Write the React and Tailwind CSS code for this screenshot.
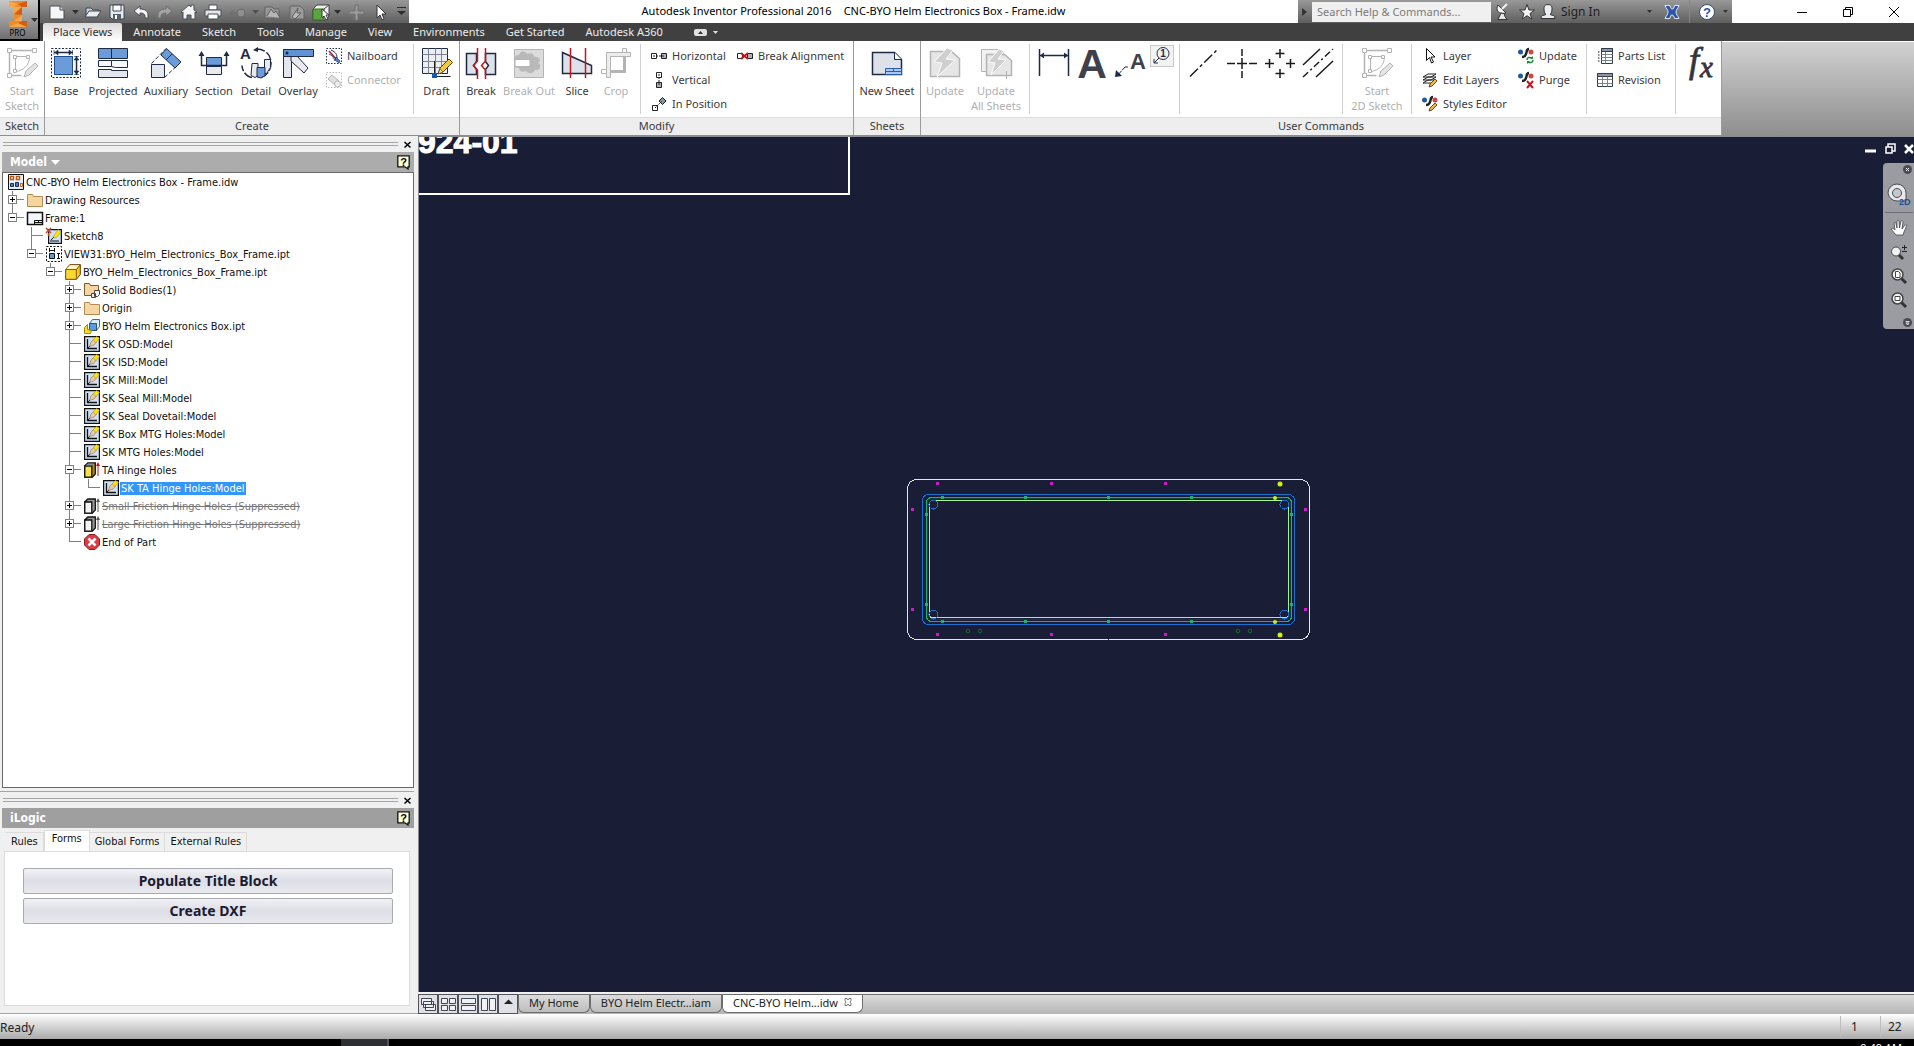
import { useState } from 'react';

const NAVY = '#1f2a44';
const GREY = '#b4b4b4';

/* ---------- helpers ---------- */

function Svg({ w = 16, h, children, className = '' }) {
    return (
        <svg width={w} height={h || w} viewBox={`0 0 ${w} ${h || w}`} fill="none" className={`shrink-0 overflow-visible ${className}`} aria-hidden="true">
            {children}
        </svg>
    );
}

function Caret({ className = 'text-[#2e2e2e]' }) {
    return (
        <Svg w={7} h={4} className={className}>
            <path d="M0 0h7L3.500 4z" fill="currentColor" />
        </Svg>
    );
}

/* ---------- quick access icons ---------- */

const qat = {
    new: (
        <Svg w={20}>
            <path d="M3 4h10l4 4v9H3z" fill="#f4f6f8" stroke="#4a4d52" />
            <path d="M13 4v4h4" fill="#cfd4da" stroke="#4a4d52" />
        </Svg>
    ),
    open: (
        <Svg w={20}>
            <path d="M3 15V6h5l2 2h6v2" fill="#c9d0d8" stroke="#3f4650" />
            <path d="M2 15l4-6h12l-4 6z" fill="#e9edf1" stroke="#3f4650" />
        </Svg>
    ),
    save: (
        <Svg w={20}>
            <path d="M3 3h14v14H5l-2-2z" fill="#e6e9ee" stroke="#3c4454" />
            <path d="M6 3h8v6H6z" fill="#fff" stroke="#3c4454" />
            <path d="M6 12h8v5H6z" fill="#56606f" />
            <path d="M8 13h2v4H8z" fill="#fff" />
        </Svg>
    ),
    undo: (
        <Svg w={20}>
            <path d="M3 9l6-5v3c5 0 8 2 8 6v3h-3v-2c0-2-2-3-5-3v3z" fill="#f2f4f6" stroke="#4a4d52" />
        </Svg>
    ),
    redo: (
        <Svg w={20}>
            <path d="M17 9l-6-5v3c-5 0-8 2-8 6v3h3v-2c0-2 2-3 5-3v3z" fill="#a3a3a3" stroke="#6e6e6e" />
        </Svg>
    ),
    home: (
        <Svg w={20}>
            <path d="M2 10l8-7 2 2V3h3v5l3 2-1 1-1-1v7h-4v-4H8v4H4v-7l-1 1z" fill="#f2f4f6" stroke="#4a4d52" />
        </Svg>
    ),
    print: (
        <Svg w={20}>
            <path d="M6 3h8v5H6z" fill="#fff" stroke="#4a4d52" />
            <path d="M2 8h16v6H2z" fill="#e4e7ea" stroke="#4a4d52" />
            <path d="M5 12h10v5H5z" fill="#fff" stroke="#4a4d52" />
        </Svg>
    ),
    back: (
        <Svg w={20}>
            <path d="M2 11l4-3v2h4v2H6v2z" fill="#6f6f6f" />
            <circle cx="14" cy="11" r="4" fill="#8f8f8f" stroke="#6a6a6a" />
        </Svg>
    ),
    image: (
        <Svg w={20}>
            <path d="M2 5h7l2 2h5v9H2z" fill="#999" stroke="#636363" />
            <path d="M4 14l4-7 3 4 2-2 4 7" fill="#b5b5b5" stroke="#5e5e5e" />
        </Svg>
    ),
    sheet: (
        <Svg w={20}>
            <path d="M3 4h10l4 4v9H3z" fill="#9a9a9a" stroke="#636363" />
            <path d="M5 15l6-9-1 5h4l-6 6z" fill="#bbb" stroke="#5e5e5e" />
        </Svg>
    ),
    cube: (
        <Svg w={20}>
            <path d="M2 7l4-4h12v11l-4 4H2z" fill="#eef1ee" stroke="#444" />
            <path d="M2 7h11v11H2z" fill="#58a63c" stroke="#3c6b2c" />
            <path d="M13 7l5-4" stroke="#444" />
            <path d="M11 7v9l2-2 2 4 2-1-2-4h3z" fill="#fff" stroke="#333" />
        </Svg>
    ),
    plus: (
        <Svg w={20}>
            <path d="M8 3h3v6h6v3h-6v6H8v-6H2V9h6z" fill="#9b9b9b" stroke="#717171" />
        </Svg>
    ),
    cursor: (
        <Svg w={20}>
            <path d="M6 3v13l3-3 2 5 2-1-2-5h4z" fill="#fff" stroke="#333" />
        </Svg>
    ),
};

/* ---------- ribbon icons, 32px ---------- */

function StartSketchIcon() {
    return (
        <Svg w={32}>
            <g stroke={GREY}>
                <path d="M3.500 3.500h26M3.500 3.500v25h12" strokeWidth="1.500" />
                <path d="M9.500 9.500h14c0 8-5 14-14 15z" />
                <path d="M1.500 1.500h4v4h-4zM26.500 1.500h4v4h-4zM1.500 26.500h4v4h-4zM7.500 8.500h3v3h-3zM20.500 8.500h3v3h-3zM7.500 22.500h3v3h-3z" fill="#fff" />
                <path d="M18 30l2-6 9-8 3 3-9 9z" fill="#e4e4e4" />
            </g>
        </Svg>
    );
}

function BaseIcon() {
    return (
        <Svg w={32}>
            <rect x="1.500" y="1.500" width="29" height="29" stroke={NAVY} strokeDasharray="2 1.500" />
            <rect x="4.500" y="9.500" width="18" height="18" fill="#6b9bd8" stroke="#1d4d8f" />
            <path d="M4 5.500h19M26.500 9v19" stroke={NAVY} strokeWidth="1.500" />
            <path d="M4 3v5M22.500 3v5M24 9.500h5M24 27.500h5M5 5.500l3-2.500v5zM22 5.500L19 3v5zM26.500 10L24 13h5zM26.500 27L24 24h5z" fill={NAVY} stroke={NAVY} strokeWidth=".6" />
        </Svg>
    );
}

function ProjectedIcon() {
    return (
        <Svg w={32}>
            <path d="M1.500 1.500h29v10h-29z" fill="#6b9bd8" stroke={NAVY} />
            <path d="M14.500 1.500v10" stroke={NAVY} />
            <path d="M1.500 13.500h13v6h-13zM14.500 13.500h16v7h-12l-4-1" fill="#f6f7f9" stroke={NAVY} />
            <path d="M1.500 22.500h13v1h16v7h-29z" fill="#e3e6ec" stroke={NAVY} />
        </Svg>
    );
}

function AuxiliaryIcon() {
    return (
        <Svg w={32}>
            <path d="M1.500 16.500L16 1.500M14.500 30.500L31 15" stroke={NAVY} strokeDasharray="4 2" />
            <path d="M11 8l5.500-6.500L31 15l-6 6z" fill="#6b9bd8" stroke={NAVY} />
            <path d="M22 7l-6 6" stroke={NAVY} />
            <path d="M1.500 17.500h13v13h-13z" fill="#e3e6ec" stroke={NAVY} />
        </Svg>
    );
}

function SectionIcon() {
    return (
        <Svg w={32}>
            <path d="M8.500 10.500h15v9h-15z" fill="#6b9bd8" stroke={NAVY} />
            <path d="M8.500 19.500h15v8h-15z" fill="#e8eaee" stroke={NAVY} />
            <path d="M3.500 8v10.500h25V8" stroke={NAVY} strokeWidth="1.500" />
            <path d="M.5 9l3-5 3 5zM25.500 9l3-5 3 5z" fill={NAVY} />
        </Svg>
    );
}

function DetailIcon() {
    return (
        <Svg w={32}>
            <path d="M12 30.500c-6-1-10-7-10-12M16 2c10 0 15 6 15 14s-5 14-12 15" stroke={NAVY} strokeWidth="1.500" strokeDasharray="9 2" />
            <path d="M12 16.500h6v12l-3 2-4-2zM24.500 12.500h6v8l-4 6h-2z" fill="#e8eaee" stroke={NAVY} />
            <path d="M17 20.500h8v8l-4 2.500-4-1z" fill="#6b9bd8" stroke={NAVY} />
            <path d="M13 3l5-3v5z" fill={NAVY} />
            <text x="0" y="12" fontSize="15" fontWeight="bold" fontFamily="Liberation Sans, sans-serif" fill={NAVY}>A</text>
        </Svg>
    );
}

function OverlayIcon() {
    return (
        <Svg w={32}>
            <path d="M1.500 2.500h8v28h-8z" fill="#e3e6ec" stroke={NAVY} />
            <path d="M9 9l5-1 12 13-4 5L9 14z" fill="#e8eaee" stroke={NAVY} />
            <path d="M1.500 2.500h30v7h-30z" fill="#5f93d6" stroke={NAVY} />
            <circle cx="5" cy="6" r="1.500" fill={NAVY} />
        </Svg>
    );
}

function DraftIcon() {
    return (
        <Svg w={32}>
            <path d="M1.500 1.500h25v25h-25z" fill="#eceef2" stroke={NAVY} />
            <path d="M7.500 1.500v25M14.500 1.500v25M20.500 1.500v25M1.500 7.500h25M1.500 14.500h25M1.500 20.500h25" stroke="#7c8393" />
            <path d="M13.500 14v15M13.500 29.500h16" stroke="#1a1a1a" />
            <path d="M11 26h5v5h-5z" fill="#1559b5" />
            <path d="M17 27l2-6 9-9 3.500 3.500-9 9z" fill="#f6c832" stroke="#51401a" />
            <path d="M17 27l2-5 3 3z" fill="#f1dfb8" stroke="#51401a" strokeWidth=".6" />
        </Svg>
    );
}

function BreakIcon() {
    return (
        <Svg w={32}>
            <path d="M1.500 6.500h10v8l-3 4 3 4v5h-10zM20.500 6.500h10v21h-10v-5l3-4-3-4z" fill="#dde2ea" stroke={NAVY} strokeWidth="1.500" />
            <path d="M12.500 1v13l-4 4.500 4 4.500v9M20.500 1v13l-4 4.500 4 4.500v9" stroke="#c4161c" strokeWidth="1.500" />
        </Svg>
    );
}

function BreakOutIcon() {
    return (
        <Svg w={32}>
            <path d="M1.500 2.500h29v28h-29z" fill="#dcdcdc" stroke={GREY} />
            <path d="M2 10c2-3 4-1 5-4 3-3 6-1 7 1 4-2 7 0 7 3 5-1 8 4 4 6 4 2 2 8-3 7-2 5-8 3-9 1-4 2-7 0-7-3-2 0-4 0-4-2z" fill="#b9b9b9" />
            <path d="M2 12.500h15v7H2z" fill="#fff" stroke={GREY} />
        </Svg>
    );
}

function SliceIcon() {
    return (
        <Svg w={32}>
            <path d="M1.500 5.500v21h29v-8z" fill="#dde2ea" stroke={NAVY} strokeWidth="1.500" />
            <path d="M9.500 1v30M24.500 1v30" stroke="#c4161c" strokeWidth="1.500" />
        </Svg>
    );
}

function CropIcon() {
    return (
        <Svg w={32}>
            <path d="M6.500 30.500v-25h24v4h-20v21z" fill="#ececec" stroke={GREY} />
            <path d="M10.500 24.500h14v-15" stroke={GREY} strokeWidth="3" />
            <path d="M22.500 1.500h4v4h-4zM1.500 22.500h5v4h-5z" fill="#fff" stroke={GREY} />
        </Svg>
    );
}

function NewSheetIcon() {
    return (
        <Svg w={32}>
            <path d="M1.500 5.500h22l7 7v15h-29z" fill="#dde2ea" stroke={NAVY} strokeWidth="1.500" />
            <path d="M23.500 5.500v7h7" fill="#fff" stroke={NAVY} />
            <path d="M14.500 21.500h16v6h-16z" fill="#a9c8f2" stroke="#2c5da3" />
            <path d="M14.500 24.500h16M22.500 21.500v3" stroke="#2c5da3" />
        </Svg>
    );
}

function UpdateIcon() {
    return (
        <Svg w={32}>
            <path d="M1.500 4.500h21l8 7v18h-29z" fill="#e6e6e6" stroke={GREY} strokeWidth="1.500" />
            <path d="M18 1L5 15l8 1-5 14 18-17-9-1 7-9z" fill="#cfcfcf" stroke="#fff" />
        </Svg>
    );
}

function UpdateAllIcon() {
    return (
        <Svg w={32}>
            <path d="M1.500 2.500h18l5 5v17h-23z" fill="#f2f2f2" stroke={GREY} />
            <path d="M6.500 7.500h18l7 6v15h-25z" fill="#e6e6e6" stroke={GREY} strokeWidth="1.500" />
            <path d="M19 2L8 15l7 1-4 12 15-15-8-1 6-8z" fill="#cfcfcf" stroke="#fff" />
            <path d="M26.500 24v8M22 28.500h9" stroke={GREY} />
        </Svg>
    );
}

function DimensionIcon() {
    return (
        <Svg w={32}>
            <path d="M1.500 2v27M30.500 2v27M2 8.500h28" stroke={NAVY} strokeWidth="1.500" />
            <path d="M2 8.500l4-3v6zM30 8.500l-4-3v6z" fill={NAVY} />
        </Svg>
    );
}

function TextIcon() {
    return (
        <Svg w={32}>
            <text x="16" y="31" fontSize="41" fontWeight="bold" textAnchor="middle" fontFamily="Liberation Sans, sans-serif" fill="#3f404c">A</text>
        </Svg>
    );
}

function LeaderIcon() {
    return (
        <Svg w={32}>
            <path d="M3 29l8-9h4" stroke={NAVY} strokeDasharray="7 1" />
            <path d="M1 30l1-7 6 6z" fill={NAVY} />
            <text x="24" y="22" fontSize="22" fontWeight="bold" textAnchor="middle" fontFamily="Liberation Sans, sans-serif" fill="#3f404c">A</text>
        </Svg>
    );
}

function BalloonIcon() {
    return (
        <Svg w={20}>
            <circle cx="11" cy="7.500" r="6" stroke={NAVY} />
            <path d="M7 12l-5 5M2 13v4h4" stroke={NAVY} />
            <text x="11" y="11" fontSize="10" fontWeight="bold" textAnchor="middle" fontFamily="Liberation Sans, sans-serif" fill={NAVY}>1</text>
        </Svg>
    );
}

function CenterlineIcon() {
    return (
        <Svg w={32}>
            <path d="M2 29.500L30 2" stroke="#1a1a1a" strokeWidth="1.500" strokeDasharray="11 3 3 3" />
        </Svg>
    );
}

function CenterMarkIcon() {
    return (
        <Svg w={32}>
            <path d="M16 2v7M16 11v11M16 24v7M1 16.500h8M11 16.500h10M23 16.500h8" stroke="#1a1a1a" strokeWidth="1.500" />
        </Svg>
    );
}

function CenterPatternIcon() {
    return (
        <Svg w={32}>
            <path d="M16 2v9M11.500 6.500h9M16 22v9M11.500 26.500h9M5.500 12v9M1 16.500h9M26.500 12v9M22 16.500h9" stroke="#1a1a1a" strokeWidth="1.500" />
        </Svg>
    );
}

function BisectorIcon() {
    return (
        <Svg w={32}>
            <path d="M1 18L18 2M14 30l17-16" stroke="#1a1a1a" strokeWidth="1.500" />
            <path d="M1 30L31 2" stroke="#1a1a1a" strokeWidth="1.500" strokeDasharray="7 3 2 3" />
        </Svg>
    );
}

/* ---------- ribbon icons, 16px ---------- */

function Pencil({ x = 0, y = 0 }) {
    return <path transform={`translate(${x} ${y})`} d="M0 8l1-3 5-5 2 2-5 5z" fill="#f3b63a" stroke="#5b3b12" strokeWidth=".9" />;
}

function NailboardIcon() {
    return (
        <Svg>
            <rect x=".5" y=".5" width="15" height="15" stroke={NAVY} strokeDasharray="1.500 1.500" />
            <path d="M3 3l8 9" stroke="#c4161c" strokeWidth="1.500" />
            <path d="M5 2c5 2 6 5 6 8" stroke={NAVY} />
            <path d="M3 6c3 1 5 4 6 7" stroke="#2c5da3" />
            <path d="M10 9l4 4-1 2-4-3z" fill="#4e86d0" stroke={NAVY} strokeWidth=".7" />
        </Svg>
    );
}

function ConnectorIcon() {
    return (
        <Svg>
            <rect x=".5" y=".5" width="15" height="15" stroke="#bdbdbd" strokeDasharray="1.500 1.500" />
            <path d="M2 7l4-4 7 6-4 4z" fill="#e1e1e1" stroke={GREY} />
            <circle cx="11.500" cy="12" r="3" fill="#eee" stroke={GREY} />
        </Svg>
    );
}

function HorizontalIcon() {
    return (
        <Svg>
            <path d="M.5 5.500h5v5h-5z" fill="#fff" stroke="#222" />
            <path d="M10.500 5.500h5v5h-5z" fill="#aab2c0" stroke="#222" />
            <path d="M2 8h12" stroke="#222" strokeDasharray="2 1" />
        </Svg>
    );
}

function VerticalIcon() {
    return (
        <Svg>
            <path d="M5.500.5h5v5h-5z" fill="#fff" stroke="#222" />
            <path d="M5.500 10.500h5v5h-5z" fill="#aab2c0" stroke="#222" />
            <path d="M8 2v12" stroke="#222" strokeDasharray="2 1" />
        </Svg>
    );
}

function InPositionIcon() {
    return (
        <Svg>
            <path d="M1.500 9.500h5v5h-5z" fill="#fff" stroke="#222" />
            <path d="M8 5l3.500-3.500L15 5l-3.500 3.500z" fill="#8b93a1" stroke="#222" />
            <path d="M4 12l7-7" stroke="#222" strokeDasharray="2 1" />
        </Svg>
    );
}

function BreakAlignIcon() {
    return (
        <Svg>
            <path d="M.5 5.500h5v5h-5z" fill="#fff" stroke="#222" />
            <path d="M10.500 5.500h5v5h-5z" fill="#aab2c0" stroke="#222" />
            <path d="M4 5l7 6M11 5l-7 6" stroke="#c4161c" strokeWidth="2" />
        </Svg>
    );
}

function LayerIcon() {
    return (
        <Svg>
            <path d="M4.500.5v12l3-3 2 5.500 2-1-2.500-5h4z" fill="#fff" stroke="#111" />
        </Svg>
    );
}

function EditLayersIcon() {
    return (
        <Svg>
            <path d="M1 11l5-3h8l-5 3zM1 8l5-3h8l-5 3zM1 5l5-3h8l-5 3z" fill="#fff" stroke="#222" />
            <Pencil x={7} y={7} />
        </Svg>
    );
}

function StyleMarks() {
    return (
        <>
            <circle cx="2.500" cy="4" r="2.500" fill="#1e5aa0" />
            <circle cx="13" cy="4" r="2.500" fill="#c94a45" />
            <path d="M11 1C8 1 9 4 8 6s-1 3-4 3" stroke="#222" strokeWidth="2.500" />
        </>
    );
}

function StylesEditorIcon() {
    return (
        <Svg>
            <StyleMarks />
            <Pencil x={7} y={7} />
        </Svg>
    );
}

function StylesUpdateIcon() {
    return (
        <Svg>
            <StyleMarks />
            <path d="M9 12c0-3 3-3 5-2M15 12c0 3-3 3-5 2" stroke="#1e8a35" strokeWidth="1.500" />
            <path d="M15 8v3h-3zM9 16v-3h3z" fill="#1e8a35" />
        </Svg>
    );
}

function PurgeIcon() {
    return (
        <Svg>
            <StyleMarks />
            <path d="M9 9l6 7M15 9l-6 7" stroke="#c4161c" strokeWidth="2" />
        </Svg>
    );
}

function PartsListIcon() {
    return (
        <Svg>
            <path d="M4.500.5h11v15h-11z" fill="#fff" stroke="#333b4b" />
            <path d="M4.500.5h11v3h-11z" fill="#8d97a8" stroke="#333b4b" />
            <path d="M4.500 6.500h11M4.500 9.500h11M4.500 12.500h11M8.500 3.500v12" stroke="#7a8190" />
            <path d="M1 4h1.500M1 7h1.500M1 10h1.500M1 13h1.500" stroke="#222" />
        </Svg>
    );
}

function RevisionIcon() {
    return (
        <Svg>
            <path d="M.5 1.500h15v13H.5z" fill="#fff" stroke="#333b4b" />
            <path d="M.5 1.500h15v3H.5z" fill="#8d97a8" stroke="#333b4b" />
            <path d="M.5 7.500h15M.5 11.500h15M5.500 4.500v10M10.500 4.500v10" stroke="#7a8190" />
        </Svg>
    );
}

/* ---------- ribbon pieces ---------- */

function BigButton({ icon, label, width, disabled }) {
    return (
        <button
            type="button"
            disabled={disabled}
            className={`flex flex-col items-center gap-1 pt-1.5 text-[#3a3a40] disabled:text-[#b0b0b0] leading-[15px] whitespace-pre text-center ${width}`}
        >
            {icon}
            <span>{label}</span>
        </button>
    );
}

function SmallButton({ icon, label, disabled }) {
    return (
        <button type="button" disabled={disabled} className="flex h-6 items-center gap-[5px] whitespace-nowrap text-[#3a3a40] disabled:text-[#b0b0b0]">
            {icon}
            <span>{label}</span>
        </button>
    );
}

function IconButton({ icon, label, width }) {
    return (
        <button type="button" aria-label={label} className={`flex items-start justify-center pt-1.5 ${width}`}>
            {icon}
        </button>
    );
}

function Divider({ className = '' }) {
    return <div className={`my-[3px] w-px shrink-0 bg-[#cfcfcf] ${className}`} />;
}

function Group({ title, children, className = '' }) {
    return (
        <section className={`flex shrink-0 flex-col border-r border-[#9b9b9b] ${className}`}>
            <div className="flex h-[76px] bg-white">{children}</div>
            <h2 className="flex h-[18px] items-center justify-center border-t border-[#dcdcdc] bg-[#eee] text-[#3a3a40]">{title}</h2>
        </section>
    );
}

function Ribbon() {
    return (
        <div className="flex h-[95px] shrink-0 border-b border-[#8a8d92] bg-white">
            <Group title="Sketch" className="w-[45px]">
                <BigButton disabled icon={<StartSketchIcon />} label={'Start\nSketch'} width="w-11" />
            </Group>
            <Group title="Create" className="w-[415px]">
                <BigButton icon={<BaseIcon />} label="Base" width="w-[42px]" />
                <BigButton icon={<ProjectedIcon />} label="Projected" width="w-[52px]" />
                <BigButton icon={<AuxiliaryIcon />} label="Auxiliary" width="w-[54px]" />
                <BigButton icon={<SectionIcon />} label="Section" width="w-[42px]" />
                <BigButton icon={<DetailIcon />} label="Detail" width="w-[42px]" />
                <BigButton icon={<OverlayIcon />} label="Overlay" width="w-[42px]" />
                <div className="flex flex-1 flex-col pt-[3px] pl-[7px]">
                    <SmallButton icon={<NailboardIcon />} label="Nailboard" />
                    <SmallButton disabled icon={<ConnectorIcon />} label="Connector" />
                </div>
                <Divider />
                <BigButton icon={<DraftIcon />} label="Draft" width="w-[45px]" />
            </Group>
            <Group title="Modify" className="w-[394px]">
                <BigButton icon={<BreakIcon />} label="Break" width="w-[42px]" />
                <BigButton disabled icon={<BreakOutIcon />} label="Break Out" width="w-[54px]" />
                <BigButton icon={<SliceIcon />} label="Slice" width="w-[42px]" />
                <BigButton disabled icon={<CropIcon />} label="Crop" width="w-9" />
                <Divider className="ml-1.5" />
                <div className="flex gap-2.5 pt-[3px] pl-2.5">
                    <div className="flex flex-col">
                        <SmallButton icon={<HorizontalIcon />} label="Horizontal" />
                        <SmallButton icon={<VerticalIcon />} label="Vertical" />
                        <SmallButton icon={<InPositionIcon />} label="In Position" />
                    </div>
                    <SmallButton icon={<BreakAlignIcon />} label="Break Alignment" />
                </div>
            </Group>
            <Group title="Sheets" className="w-[67px]">
                <BigButton icon={<NewSheetIcon />} label="New Sheet" width="w-full" />
            </Group>
            <Group title="User Commands" className="w-[801px]">
                <BigButton disabled icon={<UpdateIcon />} label="Update" width="w-12" />
                <BigButton disabled icon={<UpdateAllIcon />} label={'Update\nAll Sheets'} width="w-[54px]" />
                <Divider className="ml-1.5" />
                <div className="flex flex-1 pl-1.5">
                    <IconButton icon={<DimensionIcon />} label="Dimension" width="w-9" />
                    <IconButton icon={<TextIcon />} label="Text" width="w-10" />
                    <IconButton icon={<LeaderIcon />} label="Leader Text" width="w-9" />
                    <button type="button" aria-label="Balloon" className="mt-1 ml-0.5 flex h-[22px] w-6 items-center justify-center border border-[#c9c9c9] bg-[#f2f2f2]">
                        <BalloonIcon />
                    </button>
                </div>
                <Divider />
                <div className="flex w-[162px] pl-[5px]">
                    <IconButton icon={<CenterlineIcon />} label="Centerline" width="w-[38px]" />
                    <IconButton icon={<CenterMarkIcon />} label="Center Mark" width="w-[38px]" />
                    <IconButton icon={<CenterPatternIcon />} label="Centered Pattern" width="w-[38px]" />
                    <IconButton icon={<BisectorIcon />} label="Centerline Bisector" width="w-[38px]" />
                </div>
                <Divider />
                <BigButton disabled icon={<StartSketchIcon />} label={'Start\n2D Sketch'} width="w-[68px]" />
                <Divider />
                <div className="flex w-[174px] pt-[3px] pl-2.5">
                    <div className="flex w-24 flex-col">
                        <SmallButton icon={<LayerIcon />} label="Layer" />
                        <SmallButton icon={<EditLayersIcon />} label="Edit Layers" />
                        <SmallButton icon={<StylesEditorIcon />} label="Styles Editor" />
                    </div>
                    <div className="flex flex-col">
                        <SmallButton icon={<StylesUpdateIcon />} label="Update" />
                        <SmallButton icon={<PurgeIcon />} label="Purge" />
                    </div>
                </div>
                <Divider />
                <div className="flex w-[88px] flex-col pt-[3px] pl-2.5">
                    <SmallButton icon={<PartsListIcon />} label="Parts List" />
                    <SmallButton icon={<RevisionIcon />} label="Revision" />
                </div>
                <Divider />
                <button type="button" aria-label="Parameters" className="flex w-[45px] items-start justify-center pt-1 pl-1">
                    <Svg w={32} h={36}>
                        <text x="4" y="27" fontSize="36" fontStyle="italic" fontFamily="Liberation Serif, serif" fill="#33343e" stroke="#33343e" strokeWidth=".8">f</text>
                        <text x="15" y="32" fontSize="29" fontStyle="italic" fontFamily="Liberation Serif, serif" fill="#33343e" stroke="#33343e" strokeWidth=".8">x</text>
                    </Svg>
                </button>
            </Group>
            <div className="flex-1 border-t border-white bg-linear-to-b from-[#d2d2d2] to-[#8f8f8f]" />
        </div>
    );
}

/* ---------- title bar ---------- */

function QatButton({ icon, label }) {
    return (
        <button type="button" aria-label={label} className="flex w-6 items-center justify-center">
            {icon}
        </button>
    );
}

function TitleBar() {
    return (
        <header className="flex h-[23px] min-w-0">
            <div className="flex w-[369px] shrink-0 items-center bg-linear-to-b from-[#999] to-[#5f5f5f] pl-[5px]">
                <QatButton icon={qat.new} label="New" />
                <span className="flex w-3 justify-center"><Caret /></span>
                <QatButton icon={qat.open} label="Open" />
                <QatButton icon={qat.save} label="Save" />
                <QatButton icon={qat.undo} label="Undo" />
                <QatButton icon={qat.redo} label="Redo" />
                <QatButton icon={qat.home} label="Home" />
                <QatButton icon={qat.print} label="Print" />
                <QatButton icon={qat.back} label="Return" />
                <span className="flex w-3 justify-center"><Caret className="text-[#505050]" /></span>
                <QatButton icon={qat.image} label="Update" />
                <QatButton icon={qat.sheet} label="Update Sheet" />
                <QatButton icon={qat.cube} label="Select" />
                <span className="flex w-2 justify-center"><Caret /></span>
                <span className="ml-1 flex">
                    <QatButton icon={qat.plus} label="Add" />
                    <QatButton icon={qat.cursor} label="Pointer" />
                </span>
                <Svg w={9} h={9} className="ml-1 text-[#2e2e2e]">
                    <path d="M0 .5h9" stroke="currentColor" />
                    <path d="M0 4h9L4.500 8z" fill="currentColor" />
                </Svg>
            </div>
            <h1 className="flex min-w-0 flex-1 items-center justify-center gap-3 bg-white whitespace-nowrap text-black">
                <span>Autodesk Inventor Professional 2016</span>
                <span>CNC-BYO Helm Electronics Box - Frame.idw</span>
            </h1>
            <div className="flex w-[434px] shrink-0 items-center bg-linear-to-b from-[#999] to-[#5f5f5f] pl-1">
                <Svg w={5} h={8} className="mr-[5px]"><path d="M0 0v8l5-4z" fill="#333" /></Svg>
                <input
                    type="text"
                    aria-label="Search Help & Commands"
                    placeholder="Search Help & Commands..."
                    className="h-5 w-[179px] bg-[#f0f0f0] px-[5px] text-[#7a7a7a] placeholder:text-[#7a7a7a] outline-none"
                />
                <button type="button" aria-label="Communication Center" className="flex w-6 justify-center">
                    <Svg w={18}>
                        <path d="M4 2c-3 5 1 10 8 8z" fill="#f4f4f4" stroke="#333" />
                        <path d="M8 6l5-5" stroke="#f4f4f4" strokeWidth="2" />
                        <path d="M4 16.500h9l-2-3-1-3-3-.5z" stroke="#333" fill="#e6e6e6" />
                    </Svg>
                </button>
                <button type="button" aria-label="Favorites" className="flex w-6 justify-center">
                    <Svg w={18}><path d="M9 1.500l2 5.500h5.500l-4.500 3.500 1.800 5.500L9 12.700 4.200 16 6 10.500 1.500 7H7z" fill="#f4f4f4" stroke="#333" /></Svg>
                </button>
                <button type="button" className="flex items-center gap-1 text-[#1e1e1e]">
                    <Svg w={18}>
                        <path d="M9 1.500c4 0 4 3 4 4.500 0 3-1 5-2 5.500 3 1 5 1 5 4H2c0-3 2-3 5-4-1-.5-2-2.500-2-5.500 0-1.500 0-4.500 4-4.500z" fill="#e9edf2" stroke="#333" />
                    </Svg>
                    <span className="text-xs">Sign In</span>
                </button>
                <span className="ml-auto pr-2"><Svg w={5} h={3}><path d="M0 0h5L2.500 3z" fill="#333" /></Svg></span>
                <button type="button" aria-label="Exchange Apps" className="flex w-6 justify-center">
                    <Svg w={18}>
                        <path d="M2 2.500h5c.5 3 1 3.500 2.500 3.500s1.500-1.500 2-3.500H16c-1 3-3 4-3 6.500s2 4 3 6.500h-4.500c-.5-2-1-3.500-2.500-3.500s-1.500 1.500-2 3.500H2c1-2.500 3-4 3-6.500s-2-3.500-3-6.500z" fill="#2c55a5" stroke="#dfe6f3" />
                    </Svg>
                </button>
                <span className="mx-[5px] h-full w-px bg-[#858585]" />
                <button type="button" aria-label="Help" className="flex w-6 justify-center">
                    <Svg w={18}>
                        <circle cx="9" cy="9" r="7.500" fill="#fff" stroke="#3d4f70" />
                        <text x="9" y="13.500" fontSize="13" fontWeight="bold" textAnchor="middle" fontFamily="Liberation Sans, sans-serif" fill="#1f55b3">?</text>
                    </Svg>
                </button>
                <span className="px-1"><Svg w={5} h={3}><path d="M0 0h5L2.500 3z" fill="#333" /></Svg></span>
            </div>
            <div className="flex w-[182px] shrink-0 items-center justify-end gap-[30px] bg-white pr-3">
                <button type="button" aria-label="Minimize"><Svg><path d="M3 8.500h10" stroke="#000" /></Svg></button>
                <button type="button" aria-label="Restore">
                    <Svg>
                        <path d="M3.500 5.500h7v7h-7zM5.500 5.500v-2h7v7h-2" stroke="#000" />
                    </Svg>
                </button>
                <button type="button" aria-label="Close"><Svg><path d="M3 3l10 10M13 3L3 13" stroke="#000" /></Svg></button>
            </div>
        </header>
    );
}

const RIBBON_TABS = ['Place Views', 'Annotate', 'Sketch', 'Tools', 'Manage', 'View', 'Environments', 'Get Started', 'Autodesk A360'];

function RibbonTabs() {
    const [active, setActive] = useState('Place Views');
    return (
        <nav className="flex h-[18px] gap-px bg-[#404040] pl-[3px]">
            {RIBBON_TABS.map((tab) => (
                <button
                    key={tab}
                    type="button"
                    onClick={() => setActive(tab)}
                    className={`h-full whitespace-nowrap px-2.5 leading-[18px] ${active === tab ? 'rounded-t-xs bg-linear-to-b from-[#d9d9d9] to-white text-[#333]' : 'text-[#ececec]'}`}
                >
                    {tab}
                </button>
            ))}
            <button type="button" aria-label="Minimize ribbon" className="ml-5 flex items-center gap-1.5">
                <Svg w={13} h={7}>
                    <rect width="13" height="7" rx="2" fill="#e0e0e0" />
                    <path d="M4 5h5L6.500 2z" fill="#333" />
                </Svg>
                <Svg w={5} h={3}><path d="M0 0h5L2.500 3z" fill="#e0e0e0" /></Svg>
            </button>
        </nav>
    );
}

/* ---------- model browser ---------- */

const tree = {
    drawing: (
        <Svg>
            <path d="M.5.5h15v15H.5z" fill="#e6f0fb" stroke="#111" />
            <path d="M2.500 2.500h3v3h-3zM8.500 2.500h3v3h-3z" fill="#fff" stroke="#c05c12" strokeWidth="1.500" />
            <path d="M2.500 9.500h3v3h-3zM7.500 8.500h3v4h-3z" fill="#4b7cc0" stroke="#12305e" />
            <path d="M12.500 9.500h2v3h-2z" fill="#fff" stroke="#c05c12" />
        </Svg>
    ),
    folder: (
        <Svg>
            <path d="M.5 14.500V2.500h5l1 2h9v10z" fill="#f3d6a0" stroke="#b28a50" />
        </Svg>
    ),
    bodies: (
        <Svg>
            <path d="M.5 13.500V1.500h5l1 2h8v10z" fill="#f3d6a0" stroke="#7d5a2c" />
            <path d="M10.500 8.500h5v4l-2 2h-3zM7.500 11.500h4v4h-4z" fill="#f1f1f1" stroke="#444" />
        </Svg>
    ),
    sheet: (
        <Svg>
            <path d="M.5 2.500h15v12H.5z" fill="#f2f7fd" stroke="#111" strokeWidth="1.500" />
            <path d="M7.500 10.500h8v4h-8zM7.500 12.500h8M11.500 10.500v2" stroke="#111" />
        </Svg>
    ),
    sketch: (
        <Svg>
            <path d="M.6.6h14.800v14.800H.6z" fill="#cfe0f5" stroke="#111" strokeWidth="1.200" />
            <path d="M3.500 3v9.500H13" stroke="#111" strokeWidth="1.300" />
            <path d="M4 12l4-4" stroke="#111" />
            <path d="M5.500 10.500l1.500-4.500 2.500-2.500 3 2.500-2.500 3z" fill="#eccba2" stroke="#7d5a3a" strokeWidth=".5" />
            <path d="M9 3.800L12.500.5l3 2-3.500 4z" fill="#fbe30e" stroke="#a08912" strokeWidth=".5" />
        </Svg>
    ),
    sketchDrawing: (
        <Svg>
            <path d="M2.600 1.600h12.800v13.800H2.600z" fill="#cfe0f5" stroke="#111" strokeWidth="1.200" />
            <path d="M4 13h9M5 12l6-6" stroke="#111" />
            <path d="M7 9l5-7.500 3 2.500-5 6z" fill="#fbe30e" stroke="#a08912" strokeWidth=".5" />
            <path d="M0 0l5 5M5 0L0 5M2.500 5v3" stroke="#c5441f" strokeWidth="1.500" />
        </Svg>
    ),
    view: (
        <Svg>
            <rect x=".5" y=".5" width="15" height="15" stroke="#111" strokeDasharray="2 1.500" />
            <path d="M3.500 7.500h5v5h-5z" fill="#5d9ad8" stroke="#111" />
            <path d="M3 4.500h6M3.500 2v4M8.500 2v4M12.500 7v6M11 7.500h3M11 12.500h3" stroke="#111" />
        </Svg>
    ),
    part: (
        <Svg>
            <path d="M.7 5.500l4-4.800h10.600v10l-4 4.600H.7z" fill="#f9c81e" stroke="#5e3a06" />
            <path d="M.7 5.500h10.600v9.800H.7z" fill="#fdd835" stroke="#8a5a0a" />
            <path d="M11.300 5.500l4-4.800" stroke="#5e3a06" />
            <path d="M1.200 5L5 1.200h9.500L11 5z" fill="#fff6c4" />
        </Svg>
    ),
    derived: (
        <Svg>
            <path d="M5.500 5.500l3-4h7v7l-3 4h-7z" fill="#d9ecfa" stroke="#3a6a94" />
            <path d="M5.500 5.500h7v7h-7z" fill="#5d9ad8" stroke="#28557f" />
            <path d="M.5 9.500l3-3v5l4 1-1 3H.5z" fill="#f8dc1c" stroke="#9d8a10" />
        </Svg>
    ),
    extrude: (
        <Svg>
            <path d="M.8 4l3-3h7.500v11l-3 3.200H.8z" fill="#b18c15" stroke="#111" strokeWidth="1.300" />
            <path d="M.8 4h7v11.200h-7z" fill="#fde04a" stroke="#111" strokeWidth="1.300" />
            <path d="M1.500 3.500l2.500-2h6.500l-2.500 2z" fill="#7c8fa3" />
            <path d="M14 2v12" stroke="#c4161c" />
            <path d="M12 4l2-4 2 4z" fill="#c4161c" />
        </Svg>
    ),
    suppressed: (
        <Svg>
            <path d="M.8 4l3-3h7.500v11l-3 3.200H.8z" fill="#999" stroke="#111" strokeWidth="1.300" />
            <path d="M.8 4h7v11.200h-7z" fill="#f4f4f4" stroke="#111" strokeWidth="1.300" />
            <path d="M14 2v12" stroke="#555" />
            <path d="M12 4l2-4 2 4z" fill="#555" />
        </Svg>
    ),
    end: (
        <Svg>
            <path d="M5 .5h6L15.500 5v6L11 15.500H5L.5 11V5z" fill="#dc3b42" stroke="#8e1a22" />
            <path d="M4.500 4.500l7 7M11.500 4.500l-7 7" stroke="#fff" strokeWidth="2.500" />
        </Svg>
    ),
};

/* One guide character per indent column:
   | line passing, T branch, L last branch, + - expander with line below, M open expander closing the line */
const ROWS = [
    { guides: '', icon: 'drawing', text: 'CNC-BYO Helm Electronics Box - Frame.idw' },
    { guides: '+', icon: 'folder', text: 'Drawing Resources' },
    { guides: 'M', icon: 'sheet', text: 'Frame:1' },
    { guides: ' T', icon: 'sketchDrawing', text: 'Sketch8' },
    { guides: ' M', icon: 'view', text: 'VIEW31:BYO_Helm_Electronics_Box_Frame.ipt' },
    { guides: '  M', icon: 'part', text: 'BYO_Helm_Electronics_Box_Frame.ipt' },
    { guides: '   +', icon: 'bodies', text: 'Solid Bodies(1)' },
    { guides: '   +', icon: 'folder', text: 'Origin' },
    { guides: '   +', icon: 'derived', text: 'BYO Helm Electronics Box.ipt' },
    { guides: '   T', icon: 'sketch', text: 'SK OSD:Model' },
    { guides: '   T', icon: 'sketch', text: 'SK ISD:Model' },
    { guides: '   T', icon: 'sketch', text: 'SK Mill:Model' },
    { guides: '   T', icon: 'sketch', text: 'SK Seal Mill:Model' },
    { guides: '   T', icon: 'sketch', text: 'SK Seal Dovetail:Model' },
    { guides: '   T', icon: 'sketch', text: 'SK Box MTG Holes:Model' },
    { guides: '   T', icon: 'sketch', text: 'SK MTG Holes:Model' },
    { guides: '   -', icon: 'extrude', text: 'TA Hinge Holes' },
    { guides: '   |L', icon: 'sketch', text: 'SK TA Hinge Holes:Model' },
    { guides: '   +', icon: 'suppressed', text: 'Small Friction Hinge Holes (Suppressed)', off: true },
    { guides: '   +', icon: 'suppressed', text: 'Large Friction Hinge Holes (Suppressed)', off: true },
    { guides: '   L', icon: 'end', text: 'End of Part' },
];

function Guide({ kind }) {
    const box = '+-M'.includes(kind);
    const bottom = 'LM'.includes(kind) ? 9 : 18;
    return (
        <Svg w={19} h={18}>
            {kind !== ' ' && <path d={`M4.500 0V${bottom}`} stroke="#808080" />}
            {kind !== ' ' && kind !== '|' && <path d="M4.500 8.500H16" stroke="#808080" />}
            {box && <rect x=".5" y="4.500" width="8" height="8" fill="#fff" stroke="#808080" />}
            {box && <path d={kind === '+' ? 'M2 8.500h5M4.500 6v5' : 'M2 8.500h5'} stroke="#000" />}
        </Svg>
    );
}

function PanelHeader({ title, caret, bg }) {
    return (
        <>
            <div className="flex h-4 items-center gap-1.5 pr-[3px] pl-px">
                <div className="h-1 flex-1 border-y border-[#a5a5a5]" />
                <button type="button" aria-label={`Close ${title}`}>
                    <Svg w={7}><path d="M.5 1l6 5.500M6.500 1l-6 5.500" stroke="#000" strokeWidth="1.500" /></Svg>
                </button>
            </div>
            <div className={`flex h-5 items-center justify-between pr-1 pl-2 text-xs font-bold text-white ${bg}`}>
                <span className="flex items-center gap-1">
                    {title}
                    {caret && <Svg w={9} h={5}><path d="M0 0h9L4.500 5z" fill="#fff" /></Svg>}
                </span>
                <button type="button" aria-label={`Help for ${title}`}>
                    <Svg w={13} h={16}>
                        <path d="M.8 1.800h11.400v11H11v2.200l-3-2.200H.8z" fill="#ffffd6" stroke="#111" strokeWidth="1.300" />
                        <text x="6.500" y="11.500" fontSize="11" fontWeight="bold" textAnchor="middle" fontFamily="Liberation Sans, sans-serif" fill="#000">?</text>
                    </Svg>
                </button>
            </div>
        </>
    );
}

function ModelBrowser() {
    const [selected, setSelected] = useState('SK TA Hinge Holes:Model');
    return (
        <section className="flex min-h-0 flex-1 flex-col pb-[3px] pl-0.5">
            <PanelHeader title="Model" caret bg="bg-[#acacac]" />
            <ul className="flex-1 overflow-hidden border border-[#696969] bg-white pl-[5px] text-[#111]">
                {ROWS.map((row) => (
                    <li key={row.text} className="flex h-[18px] items-center" onClick={() => setSelected(row.text)}>
                        {[...row.guides].map((kind, i) => <Guide key={i} kind={kind} />)}
                        {tree[row.icon]}
                        <span
                            className={`ml-px px-px leading-[13px] whitespace-nowrap ${row.off ? 'text-[#777] line-through' : ''} ${selected === row.text ? 'bg-[#3296fa] text-white' : ''}`}
                        >
                            {row.text}
                        </span>
                    </li>
                ))}
            </ul>
        </section>
    );
}

function ILogicPanel() {
    const tabs = ['Rules', 'Forms', 'Global Forms', 'External Rules'];
    const [tab, setTab] = useState('Forms');
    return (
        <section className="flex h-[222px] shrink-0 flex-col border-t border-[#a5a5a5] pb-[7px] pl-0.5">
            <PanelHeader title="iLogic" bg="bg-[#9f9f9f]" />
            <div className="flex h-[23px] items-end pl-1 text-[#111]">
                {tabs.map((name) => (
                    <button
                        key={name}
                        type="button"
                        onClick={() => setTab(name)}
                        className={`whitespace-nowrap ${tab === name ? 'h-[21px] border-x border-t border-[#dcdcdc] bg-white px-[7px] pb-1' : 'h-[19px] border-t border-r border-[#dcdcdc] px-[5px]'}`}
                    >
                        {name}
                    </button>
                ))}
            </div>
            <div className="mr-1 ml-0.5 flex flex-1 flex-col gap-1 border border-[#dcdcdc] bg-white pt-4 pr-4 pl-[18px] font-['Noto_Sans','Open_Sans',sans-serif] text-sm font-bold text-[#1c1c30]">
                {['Populate Title Block', 'Create DXF'].map((name) => (
                    <button key={name} type="button" className="h-[26px] rounded-xs border border-[#a9abb3] bg-linear-to-b from-[#f1f1f5] via-[#dddee6] to-[#e9e9ef]">
                        {name}
                    </button>
                ))}
            </div>
        </section>
    );
}

/* ---------- drawing canvas ---------- */

const MAGENTA = [[937, 483], [1051, 483], [1165, 483], [937, 634], [1051, 634], [1165, 634], [912, 509], [912, 609], [1305, 509], [1305, 609]];
const GREEN = [[942, 497], [1025, 497], [1108, 497], [1191, 497], [942, 621], [1025, 621], [1108, 621], [1191, 621], [926, 514], [926, 604], [1291, 514], [1291, 604]];
const YELLOW = [[1280, 484, 2.5], [1275, 498, 2], [1275, 622, 2], [1280, 635, 2.5]];

function Drawing() {
    return (
        <svg className="absolute inset-0 h-full w-full" fill="none" aria-label="Drawing sheet">
            <g transform="translate(-419 -137)">
                <text x="418" y="153" fontSize="32" fontWeight="bold" fontFamily="Liberation Sans, sans-serif" fill="#fff" stroke="#fff">924-01</text>
                <path d="M419 194H849V137" stroke="#fff" strokeWidth="2" />
                <g shapeRendering="crispEdges">
                    <rect x="907.500" y="479.500" width="402" height="160" rx="9" stroke="#e4e6ec" />
                    <rect x="922.500" y="494.500" width="372" height="130" rx="6" stroke="#1f6fd0" />
                    <rect x="927.500" y="498.500" width="363" height="121" rx="4" stroke="#0f4038" />
                    <rect x="926.500" y="497.500" width="365" height="124" rx="5" stroke="#20b070" />
                    <rect x="929.500" y="500.500" width="359" height="117" rx="3" stroke="#a8f09a" />
                    <circle cx="933.500" cy="504.500" r="4.500" stroke="#1f6fd0" />
                    <circle cx="933.500" cy="614.500" r="4.500" stroke="#1f6fd0" />
                    <circle cx="1284.500" cy="504.500" r="4.500" stroke="#1f6fd0" />
                    <circle cx="1284.500" cy="614.500" r="4.500" stroke="#1f6fd0" />
                    <path d="M1108.500 639v2" stroke="#191d35" strokeWidth="1" />
                    {MAGENTA.map(([x, y]) => <rect key={`${x}-${y}`} x={x - 1} y={y - 1} width="3" height="3" fill="#c81ec8" />)}
                    {GREEN.map(([x, y]) => <rect key={`${x}-${y}`} x={x - 1} y={y - 1} width="3" height="3" fill="#20b070" />)}
                </g>
                {[968, 980, 1238, 1250].map((x) => <circle key={x} cx={x} cy="631" r="1.800" stroke="#156a30" />)}
                {YELLOW.map(([x, y, r]) => <circle key={`${x}-${y}`} cx={x} cy={y} r={r} fill="#cdf018" />)}
            </g>
        </svg>
    );
}

function Magnifier({ children }) {
    return (
        <Svg w={18}>
            <path d="M11 11l5 5" stroke="#333" strokeWidth="3" />
            <circle cx="7.500" cy="7.500" r="5.500" fill="#f2f2f2" stroke="#444" strokeWidth="1.500" />
            {children}
        </Svg>
    );
}

function NavBar() {
    return (
        <div className="absolute top-[26px] right-0 flex h-[166px] w-[31px] flex-col items-center rounded-l-sm bg-[#9a9ca2] py-0.5">
            <button type="button" aria-label="Close navigation bar" className="self-end pr-0.5">
                <Svg w={9}>
                    <circle cx="4.500" cy="4.500" r="4.500" fill="#4a4c52" />
                    <path d="M3 3l3 3M6 3L3 6" stroke="#fff" />
                </Svg>
            </button>
            <button type="button" aria-label="Steering wheel" className="mt-2">
                <Svg w={26}>
                    <path d="M2 11a9 9 0 1118 0v8H11a9 9 0 01-9-8z" fill="#e6e8eb" stroke="#4a4c52" />
                    <circle cx="11" cy="11" r="4.500" fill="#c5c8cd" stroke="#4a4c52" />
                    <text x="13" y="23" fontSize="9" fontWeight="bold" fontFamily="Liberation Sans, sans-serif" fill="#1e4f9a">2D</text>
                </Svg>
            </button>
            <div className="mt-1 h-px w-7 bg-[#6b6d73]" />
            <div className="mt-1.5 flex flex-col gap-1.5">
                <button type="button" aria-label="Pan">
                    <Svg w={18}>
                        <path d="M6 16l-5-6c1-1 2-1 4 1L4 4c1-1 2-1 2 1l1 4V2c1-1 2-1 2 0l.5 7L11 2c1-1 2 0 2 1l-1 7 3-4c1-1 2 0 1.500 1L14 13l-1 3z" fill="#fff" stroke="#444" strokeWidth=".8" />
                    </Svg>
                </button>
                <button type="button" aria-label="Zoom">
                    <Svg w={18}>
                        <path d="M8 11l5 5" stroke="#333" strokeWidth="3" />
                        <circle cx="6" cy="8.500" r="4.500" fill="#f2f2f2" stroke="#444" />
                        <path d="M12 4.500h5M14.500 2v5M12 8.500h5" stroke="#222" />
                    </Svg>
                </button>
                <button type="button" aria-label="Zoom all">
                    <Magnifier><path d="M5.500 4.500h3l1.500 1.500v4.500H5.500z" fill="#fff" stroke="#444" /></Magnifier>
                </button>
                <button type="button" aria-label="Zoom window">
                    <Magnifier><path d="M5 5.500h5v4H5z" fill="#fff" stroke="#444" /></Magnifier>
                </button>
            </div>
            <button type="button" aria-label="Customize" className="mt-auto self-end pr-0.5">
                <Svg w={9}>
                    <circle cx="4.500" cy="4.500" r="4.500" fill="#4a4c52" />
                    <path d="M2.500 3.500h4M3 5h3L4.500 7z" stroke="#fff" strokeWidth=".8" />
                </Svg>
            </button>
        </div>
    );
}

function Canvas() {
    return (
        <div className="relative min-h-0 flex-1 overflow-hidden border-t border-l border-[#8a8d92] bg-[#191d35]">
            <Drawing />
            <div className="absolute top-[5px] right-0 flex gap-[7px]">
                <button type="button" aria-label="Minimize drawing"><Svg w={13}><path d="M1 9h11" stroke="#fff" strokeWidth="3" /></Svg></button>
                <button type="button" aria-label="Restore drawing"><Svg w={13}><path d="M2 5h6v6H2zM4 5V2h7v7H8" stroke="#fff" strokeWidth="1.500" /></Svg></button>
                <button type="button" aria-label="Close drawing"><Svg w={10} h={13}><path d="M1 3l8 8M9 3l-8 8" stroke="#fff" strokeWidth="2.500" /></Svg></button>
            </div>
            <NavBar />
        </div>
    );
}

/* ---------- document tabs ---------- */

const ARRANGE = [
    ['Cascade', <path key="c" d="M1.500 2.500h10v6h-10zM3.500 5.500h10v6h-10zM5.500 8.500h10v6h-10z" fill="#f1f2f5" stroke="#3f4452" />],
    ['Tile', <path key="t" d="M1.500 2.500h6v5h-6zM9.500 2.500h6v5h-6zM1.500 9.500h6v5h-6zM9.500 9.500h6v5h-6z" fill="#f1f2f5" stroke="#3f4452" />],
    ['Tile horizontally', <path key="h" d="M1.500 2.500h14v5h-14zM1.500 9.500h14v5h-14z" fill="#f1f2f5" stroke="#3f4452" />],
    ['Tile vertically', <path key="v" d="M1.500 2.500h6v12h-6zM9.500 2.500h6v12h-6z" fill="#f1f2f5" stroke="#3f4452" />],
    ['More windows', <path key="m" d="M4 8h9L8.500 3.500z" fill="#222" />],
];

function DocTab({ label, active, children }) {
    return (
        <button
            type="button"
            className={`flex h-[18px] items-center gap-1.5 rounded-b-md border-x border-b border-[#6e6e6e] px-2.5 whitespace-nowrap text-[#222] ${active ? 'bg-white' : 'bg-linear-to-b from-[#dcdcdc] to-[#bdbdbd]'}`}
        >
            {label}
            {children}
        </button>
    );
}

function DocTabs() {
    return (
        <div className="flex h-[22px] shrink-0 border-t-2 border-[#f0f0f0] bg-linear-to-b from-[#dedede] to-[#b5b5b5]">
            <div className="flex">
                {ARRANGE.map(([name, shape]) => (
                    <button key={name} type="button" aria-label={name} className="flex w-5 items-center justify-center border border-[#50535c] bg-[#dfe1e6]">
                        <Svg w={17}>{shape}</Svg>
                    </button>
                ))}
            </div>
            <div className="flex flex-1 border-t border-[#6e6e6e]">
                <DocTab label="My Home" />
                <DocTab label="BYO Helm Electr...iam" />
                <DocTab label="CNC-BYO Helm...idw" active>
                    <Svg w={8} className="-mt-1"><path d="M1 .5h2l1 1.500 1-1.500h2v2L6 4l1 1.500v2H5L4 6 3 7.500H1v-2L2 4 1 2.500z" stroke="#555" strokeWidth=".8" /></Svg>
                </DocTab>
            </div>
        </div>
    );
}

function Logo() {
    return (
        <Svg w={18} h={26}>
            <path d="M0 0h18v6H0zM5 6h8v14H5zM0 20h18v6H0z" fill="#ef8a2b" />
            <path d="M0 0l9 3-4 3H0zM13 6l-8 7V6zM5 20l8-6v6zM0 26l9-4 9 4z" fill="#f7a64a" />
            <path d="M18 0v6h-5l-4-3zM13 6v8l-8-1zM18 20v6l-9-4 4-2z" fill="#cf5f14" />
        </Svg>
    );
}

export default function App() {
    return (
        <div className="flex h-screen flex-col overflow-hidden bg-[#f0f0f0] font-['Noto_Sans','Open_Sans',sans-serif] text-[11px]">
            <div className="flex shrink-0">
                <button type="button" className="flex h-[41px] w-10 shrink-0 items-center border-r-2 border-b-2 border-black bg-linear-to-b from-[#c9c9c9] to-[#6f6f6f]">
                    <span className="flex flex-1 flex-col items-center pl-1">
                        <Logo />
                        <span className="text-[8px] leading-[12px] text-black">PRO</span>
                    </span>
                    <Caret />
                </button>
                <div className="flex min-w-0 flex-1 flex-col">
                    <TitleBar />
                    <RibbonTabs />
                </div>
            </div>
            <Ribbon />
            <div className="flex min-h-0 flex-1">
                <aside className="flex w-[418px] shrink-0 flex-col border-b border-[#a5a5a5] pr-1 font-['DejaVu_Sans_Condensed','DejaVu_Sans',sans-serif]">
                    <ModelBrowser />
                    <ILogicPanel />
                </aside>
                <main className="flex min-w-0 flex-1 flex-col">
                    <Canvas />
                    <DocTabs />
                </main>
            </div>
            <footer className="flex h-[25px] shrink-0 items-stretch bg-linear-to-b from-white to-[#ababab] text-xs text-[#222]">
                <span className="flex flex-1 items-center pt-0.5">Ready</span>
                <span className="my-0.5 flex w-10 items-center border-l border-[#bdbdbd] pl-2.5">1</span>
                <span className="my-0.5 flex w-[34px] items-center border-l border-[#bdbdbd] pl-[7px]">22</span>
            </footer>
            <div className="flex h-[7px] shrink-0 overflow-hidden bg-black">
                <div className="ml-[341px] w-12 border-r-2 border-[#555] bg-[#2d2f33]" />
                <span className="mr-3 ml-auto pt-0.5 leading-[14px] text-white">9:49 AM</span>
            </div>
        </div>
    );
}
